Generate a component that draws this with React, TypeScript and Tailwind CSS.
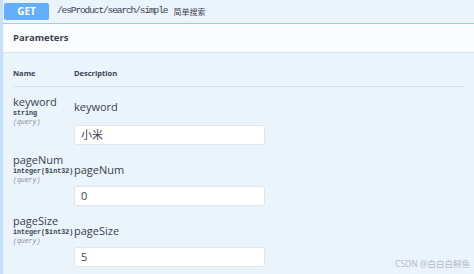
const sans = { fontFamily: '"Open Sans", "Noto Sans CJK SC", sans-serif' };

function Param({
  name,
  type,
  desc,
  value,
  wide,
}: {
  name: string;
  type: string;
  desc: string;
  value: string;
  wide?: boolean;
}) {
  return (
    <div className="flex pt-[8px]">
      <div className="w-[61px] shrink-0">
        <div className="text-[11px] leading-[13px] text-[#3b4151]">{name}</div>
        <div className="font-['Liberation_Mono',monospace] text-[6.7px] font-bold leading-[10px] text-[#3b4151] whitespace-nowrap">
          {type}
        </div>
        <div className="font-['Liberation_Mono',monospace] text-[6.5px] italic leading-[9px] text-[#8c8f96]">(query)</div>
      </div>
      <div className="flex-1">
        <div className={`${wide ? "mt-[10px]" : "mt-[5px]"} text-[11px] leading-[13px] text-[#3b4151]`}>{desc}</div>
        <div
          className={`${wide ? "mt-[10px]" : "mt-[12px]"} h-[20px] w-[191px] rounded-[2px] border border-[#dfe7ef] bg-white px-[6px] text-[11px] leading-[18px] text-[#3b4151]`}
        >
          {value}
        </div>
      </div>
    </div>
  );
}

export default function App() {
  return (
    <div
      className="relative h-[274px] w-[474px] overflow-hidden border-l-[3px] border-[#c4e0fc] bg-[#ebf3fb]"
      style={sans}
    >
      <div className="flex h-[24px] items-center border-b border-[#9ccbf9] pl-[1px]">
        <div className="flex h-[17px] w-[45px] items-center justify-center rounded-[2px] bg-[#61affe] text-[10px] font-bold text-white">
          GET
        </div>
        <span className="ml-[8px] font-['Liberation_Mono',monospace] text-[9.5px] tracking-[-1.1px] text-[#3b4151]">
          /esProduct/search/simple
        </span>
        <span className="ml-[6px] text-[8px] text-[#3b4151]">简单搜索</span>
      </div>
      <div className="flex h-[29px] items-center border-b border-[#dde5ee] bg-[#fbfcfe] px-[10px]">
        <span className="text-[9.5px] font-bold text-[#3b4151]">Parameters</span>
      </div>
      <div className="px-[10px]">
        <div className="flex h-[34px] items-end border-b border-[#d8e1ea] pb-[7px] text-[7.5px] font-bold text-[#3b4151]">
          <div className="w-[61px]">Name</div>
          <div>Description</div>
        </div>
        <Param name="keyword" type="string" desc="keyword" value="小米" />
        <Param name="pageNum" type="integer($int32)" desc="pageNum" value="0" wide />
        <Param name="pageSize" type="integer($int32)" desc="pageSize" value="5" wide />
      </div>
      <div className="absolute bottom-[3px] right-[4px] text-[8.5px] text-[#b4bac2]">CSDN @白白白鲟鱼</div>
    </div>
  );
}
